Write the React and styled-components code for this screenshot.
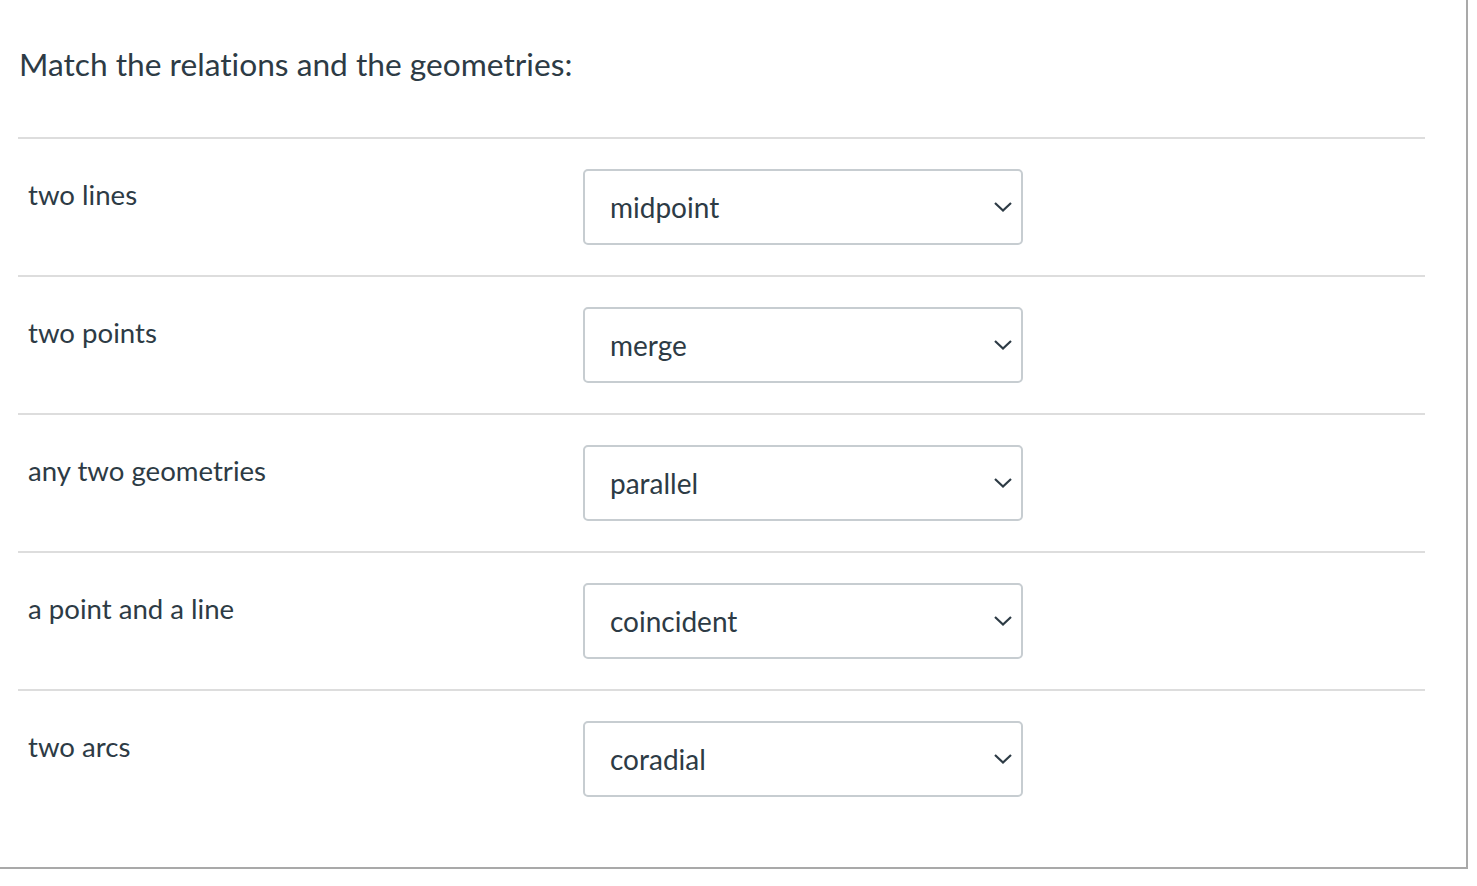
import React from 'react';
import styled, { createGlobalStyle } from 'styled-components';

const GlobalStyle = createGlobalStyle`
  html, body {
    margin: 0;
    padding: 0;
    background: #fff;
  }
  body {
    font-family: Lato, "Open Sans", sans-serif;
    font-variant-ligatures: none;
    color: #2d3b45;
  }
`;

const Card = styled.div`
  width: 1466px;
  height: 867px;
  box-sizing: content-box;
  border-right: 2px solid #a9a9a9;
  border-bottom: 2px solid #a9a9a9;
  background: #fff;
`;

const Question = styled.div`
  padding: 0 41px 0 18px;
`;

const Title = styled.h2`
  margin: 0;
  padding: 44px 0 0 1px;
  height: 137px;
  box-sizing: border-box;
  font-size: 31.7px;
  font-weight: 400;
  line-height: 40px;
  color: #2d3b45;
`;

const Row = styled.div`
  display: grid;
  grid-template-columns: 555px 440px;
  align-items: start;
  border-top: 2px solid #dddddd;
  padding: 30px 0 30px 10px;
  height: 138px;
  box-sizing: border-box;
`;

const Label = styled.div`
  font-size: 27.6px;
  line-height: 32px;
  padding-top: 10px;
`;

const Select = styled.div`
  display: flex;
  align-items: center;
  justify-content: space-between;
  height: 76px;
  box-sizing: border-box;
  border: 2px solid #c7cdd1;
  border-radius: 5px;
  padding: 0 8px 0 25px;
  font-size: 28px;
  background: #fff;
`;

const Value = styled.span`
  padding-bottom: 1px;
`;

const Chevron = () => (
  <svg width="20" height="12" viewBox="0 0 20 12">
    <path d="M2 2 L10 9.5 L18 2" fill="none" stroke="#2d3b45" strokeWidth="2.2" />
  </svg>
);

const pairs = [
  ['two lines', 'midpoint'],
  ['two points', 'merge'],
  ['any two geometries', 'parallel'],
  ['a point and a line', 'coincident'],
  ['two arcs', 'coradial'],
];

export default function App() {
  return (
    <>
      <GlobalStyle />
      <Card>
        <Question>
          <Title>Match the relations and the geometries:</Title>
          {pairs.map(([label, value]) => (
            <Row key={label}>
              <Label>{label}</Label>
              <Select>
                <Value>{value}</Value>
                <Chevron />
              </Select>
            </Row>
          ))}
        </Question>
      </Card>
    </>
  );
}
